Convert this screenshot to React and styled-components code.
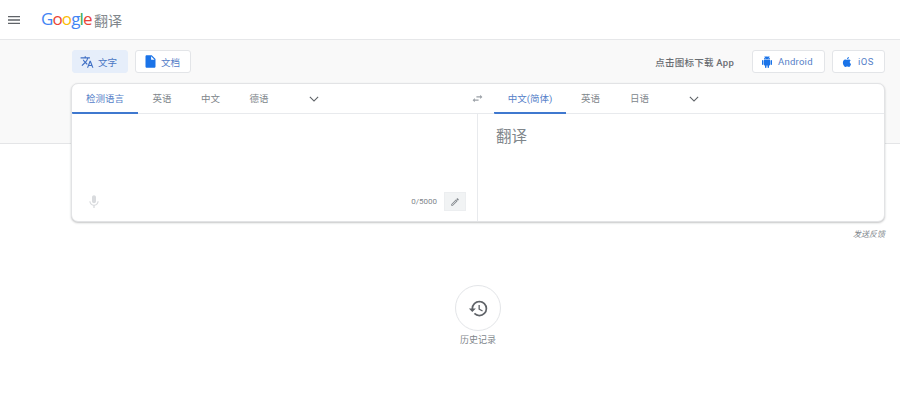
import React from 'react';
import styled, { createGlobalStyle } from 'styled-components';

const cjk = `"Roboto", "Noto Sans CJK SC", sans-serif`;

const Global = createGlobalStyle`
  html, body { margin: 0; padding: 0; background: #fff; }
  body { font-family: ${cjk}; width: 900px; height: 412px; overflow: hidden; }
  * { box-sizing: border-box; }
`;

const Header = styled.header`
  height: 40px;
  display: flex;
  align-items: center;
  border-bottom: 1px solid #e6e7e9;
  background: #fff;
`;
const Menu = styled.div`
  width: 41px;
  padding-left: 8px;
  display: flex;
  color: #5f6368;
`;
const Logo = styled.div`
  font-family: "Open Sans", sans-serif;
  font-size: 17px;
  letter-spacing: -0.9px;
  line-height: 20px;
  margin-top: -1px;
  width: 50px;
`;
const L = styled.span`
  color: ${p => p.$c};
`;
const Product = styled.div`
  font-size: 14px;
  color: #80868b;
  margin-left: 3px;
`;
const Main = styled.main`
  height: 372px;
  padding: 10px 15px 0 71px;
  background: linear-gradient(#f9f9f9 103px, #e4e5e7 103px, #e4e5e7 104px, #fff 104px);
`;
const Toolbar = styled.div`
  display: flex;
  align-items: center;
  height: 23px;
  padding-left: 1px;
`;
const Btn = styled.div`
  width: ${p => p.$w}px;
  height: 23px;
  flex: none;
  margin-right: ${p => p.$mr || 0}px;
  padding-left: ${p => p.$pl}px;
  display: flex;
  align-items: center;
  gap: ${p => p.$gap}px;
  border-radius: 3px;
  font-size: 9.5px;
  color: ${p => (p.$active ? '#4a77c4' : '#5580c8')};
  letter-spacing: ${p => p.$sp || 0}px;
  background: ${p => (p.$active ? '#e6eefa' : '#fff')};
  border: 1px solid ${p => (p.$active ? '#e6eefa' : '#e3e5e8')};
`;
const BtnIcon = styled.span`
  display: flex;
  color: ${p => p.$c || '#1a73e8'};
`;
const Spacer = styled.div`
  flex: 1;
`;
const Hint = styled.div`
  font-size: 9.5px;
  font-weight: 500;
  color: #696d72;
  letter-spacing: 0.25px;
  margin-right: 18px;
`;
const Card = styled.section`
  margin-top: 10px;
  height: 139px;
  background: #fff;
  border-radius: 7px;
  border: 1px solid #e2e3e5;
  box-shadow: 0 1px 2px rgba(60, 64, 67, 0.3);
  display: flex;
  flex-direction: column;
`;
const TabRow = styled.div`
  height: 30px;
  flex: none;
  display: flex;
  border-bottom: 1px solid #e8eaed;
`;
const Side = styled.div`
  display: flex;
  align-items: stretch;
  width: ${p => p.$w}px;
  padding-left: ${p => p.$pl || 0}px;
  flex: none;
`;
const Tab = styled.div`
  width: ${p => p.$w}px;
  height: 30px;
  flex: none;
  display: flex;
  align-items: center;
  justify-content: center;
  font-size: 9.5px;
  color: ${p => (p.$active ? '#5580c8' : '#80868b')};
  border-bottom: 2px solid ${p => (p.$active ? '#3f78cf' : 'transparent')};
  border-bottom-left-radius: 1px;
`;
const Chevron = styled.div`
  width: ${p => p.$w}px;
  flex: none;
  display: flex;
  align-items: center;
  justify-content: center;
  color: #5f6368;
`;
const Swap = styled.div`
  flex: 1;
  display: flex;
  align-items: center;
  justify-content: flex-end;
  padding-right: 1px;
  color: #9aa0a6;
`;
const Panes = styled.div`
  flex: 1;
  display: flex;
`;
const Source = styled.div`
  width: 406px;
  flex: none;
  border-right: 1px solid #e8eaed;
  display: flex;
  align-items: flex-end;
  justify-content: space-between;
  padding: 0 11px 10px 14px;
`;
const Mic = styled.div`
  display: flex;
  color: #d9dbde;
  margin-bottom: 1px;
`;
const Counter = styled.div`
  display: flex;
  align-items: center;
  gap: 7px;
  font-size: 8px;
  color: #80868b;
`;
const Pen = styled.div`
  width: 22px;
  height: 19px;
  background: #f1f3f4;
  border: 1px solid #eceef0;
  display: flex;
  align-items: center;
  justify-content: center;
  color: #80868b;
`;
const Target = styled.div`
  flex: 1;
  padding: 10px 0 0 18px;
  font-size: 15.5px;
  line-height: 26px;
  color: #80868b;
`;
const Feedback = styled.div`
  margin-top: 7px;
  text-align: right;
  font-size: 8px;
  font-style: italic;
  color: #80868b;
  line-height: 12px;
`;
const History = styled.div`
  margin-top: 44px;
  margin-left: 384px;
  width: 46px;
  display: flex;
  flex-direction: column;
  align-items: center;
`;
const Circle = styled.div`
  width: 46px;
  height: 46px;
  flex: none;
  border-radius: 50%;
  border: 1px solid #e3e5e8;
  display: flex;
  align-items: center;
  justify-content: center;
  color: #5f6368;
`;
const HistoryLabel = styled.div`
  margin-top: 3px;
  font-size: 9px;
  line-height: 13px;
  color: #80868b;
  white-space: nowrap;
`;

const Icon = ({ size, children, vb = 24 }) => (
  <svg width={size} height={size} viewBox={`0 0 ${vb} ${vb}`} fill="currentColor">{children}</svg>
);

const Down = () => (
  <Icon size={16}><path d="M6.4 8.2L12 13.8l5.6-5.6 1.2 1.2L12 16.2 5.2 9.4z" /></Icon>
);

export default function App() {
  return (
    <>
      <Global />
      <Header>
        <Menu>
          <Icon size={12}><path d="M0 4h24v2.6H0zM0 10.7h24v2.6H0zM0 17.4h24V20H0z" /></Icon>
        </Menu>
        <Logo>
          <L $c="#4285f4">G</L><L $c="#ea4335">o</L><L $c="#fbbc05">o</L><L $c="#4285f4">g</L><L $c="#34a853">l</L><L $c="#ea4335">e</L>
        </Logo>
        <Product>翻译</Product>
      </Header>
      <Main>
        <Toolbar>
          <Btn $active $w={56} $mr={7} $pl={7} $gap={4}>
            <BtnIcon $c="#3f6fc4">
              <Icon size={14}>
                <path d="M12.87 15.07l-2.54-2.51.03-.03A17.52 17.52 0 0014.07 6H17V4h-7V2H8v2H1v2h11.17C11.5 7.92 10.44 9.75 9 11.35 8.07 10.32 7.3 9.19 6.69 8h-2c.73 1.63 1.73 3.17 2.98 4.56l-5.09 5.02L4 19l5-5 3.11 3.11.76-2.04zM18.5 10h-2L12 22h2l1.12-3h4.75L21 22h2l-4.5-12zm-2.62 7l1.62-4.33L19.12 17h-3.24z" />
              </Icon>
            </BtnIcon>
            文字
          </Btn>
          <Btn $w={56} $pl={7} $gap={3}>
            <BtnIcon>
              <Icon size={15}><path d="M14 2H6c-1.1 0-2 .9-2 2v16c0 1.1.9 2 2 2h12c1.1 0 2-.9 2-2V8l-6-6zm-1 7V3.5L18.5 9H13z" /></Icon>
            </BtnIcon>
            文档
          </Btn>
          <Spacer />
          <Hint>点击图标下载 App</Hint>
          <Btn $w={73} $mr={7} $pl={8} $gap={5} $sp={0.25}>
            <BtnIcon>
              <Icon size={12}><path d="M6 18c0 .55.45 1 1 1h1v3.5a1.5 1.5 0 003 0V19h2v3.5a1.5 1.5 0 003 0V19h1c.55 0 1-.45 1-1V8H6v10zM3.5 8A1.5 1.5 0 002 9.5v7a1.5 1.5 0 003 0v-7A1.5 1.5 0 003.5 8zm17 0a1.5 1.5 0 00-1.5 1.5v7a1.5 1.5 0 003 0v-7A1.5 1.5 0 0020.5 8zm-4.97-5.84l1.3-1.3a.5.5 0 00-.7-.7l-1.48 1.48A5.84 5.84 0 0012 1c-.96 0-1.86.23-2.66.63L7.85.15a.5.5 0 00-.7.7l1.31 1.31A5.98 5.98 0 006 7h12a5.98 5.98 0 00-2.47-4.84zM10 5H9V4h1v1zm5 0h-1V4h1v1z" /></Icon>
            </BtnIcon>
            Android
          </Btn>
          <Btn $w={53} $pl={8} $gap={5} $sp={0.4}>
            <BtnIcon>
              <Icon size={12}><path d="M18.7 19.5c-.8 1.2-1.7 2.5-3 2.5-1.4 0-1.8-.8-3.3-.8-1.6 0-2 .8-3.3.8-1.4.1-2.4-1.3-3.3-2.5C4.1 17 2.8 12.5 4.7 9.4 5.6 7.8 7.2 6.9 8.9 6.8c1.3 0 2.5.9 3.3.9.8 0 2.1-1.1 3.7-.9.6 0 2.5.2 3.6 1.9-2.9 1.9-2.5 5.8.6 7.2-.3.9-.8 1.8-1.4 3.6zM13 3.5c.7-.8 1.9-1.5 2.9-1.5.1 1.2-.3 2.3-1 3.2-.7.8-1.8 1.5-2.9 1.4-.1-1.2.4-2.4 1-3.1z" /></Icon>
            </BtnIcon>
            iOS
          </Btn>
        </Toolbar>
        <Card>
          <TabRow>
            <Side $w={413}>
              <Tab $active $w={66}>检测语言</Tab>
              <Tab $w={48}>英语</Tab>
              <Tab $w={49}>中文</Tab>
              <Tab $w={48}>德语</Tab>
              <Chevron $w={62}><Down /></Chevron>
              <Swap>
                <Icon size={13}><path d="M6.99 11L3 15l3.99 4v-3H14v-2H6.99v-3zM21 9l-3.99-4v3H10v2h7.01v3L21 9z" /></Icon>
              </Swap>
            </Side>
            <Side $w={399} $pl={9}>
              <Tab $active $w={72}>中文(简体)</Tab>
              <Tab $w={49}>英语</Tab>
              <Tab $w={49}>日语</Tab>
              <Chevron $w={59}><Down /></Chevron>
            </Side>
          </TabRow>
          <Panes>
            <Source>
              <Mic>
                <Icon size={16}><path d="M12 14c1.66 0 3-1.34 3-3V5c0-1.66-1.34-3-3-3S9 3.34 9 5v6c0 1.66 1.34 3 3 3zm5.3-3c0 3-2.54 5.1-5.3 5.1S6.7 14 6.7 11H5c0 3.41 2.72 6.23 6 6.72V21h2v-3.28c3.28-.48 6-3.3 6-6.72h-1.7z" /></Icon>
              </Mic>
              <Counter>
                0/5000
                <Pen>
                  <Icon size={10}><path d="M3 17.25V21h3.75L17.81 9.94l-3.75-3.75L3 17.25zM5.92 19H5v-.92l9.06-9.06.92.92L5.92 19zM20.71 7.04a1 1 0 000-1.41l-2.34-2.34a1 1 0 00-1.41 0l-1.83 1.83 3.75 3.75 1.83-1.83z" /></Icon>
                </Pen>
              </Counter>
            </Source>
            <Target>翻译</Target>
          </Panes>
        </Card>
        <Feedback>发送反馈</Feedback>
        <History>
          <Circle>
            <Icon size={21}><path d="M13 3a9 9 0 00-9 9H1l3.89 3.89.07.14L9 12H6c0-3.87 3.13-7 7-7s7 3.13 7 7-3.13 7-7 7c-1.93 0-3.68-.79-4.94-2.06l-1.42 1.42A8.954 8.954 0 0013 21a9 9 0 000-18zm-1 5v5l4.28 2.54.72-1.21-3.5-2.08V8H12z" /></Icon>
          </Circle>
          <HistoryLabel>历史记录</HistoryLabel>
        </History>
      </Main>
    </>
  );
}
